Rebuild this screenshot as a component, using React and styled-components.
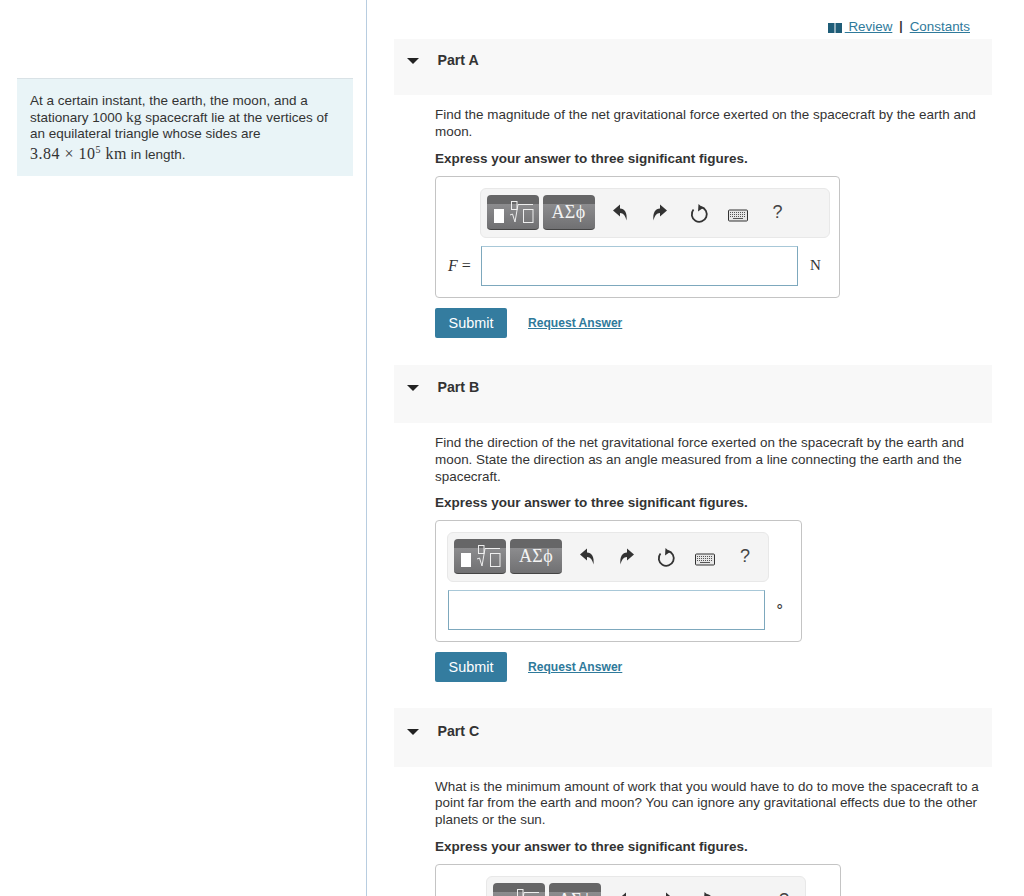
import React from "react";
import styled, { createGlobalStyle } from "styled-components";

const Global = createGlobalStyle`
  html, body { margin: 0; padding: 0; height: 896px; overflow: hidden; background: #fff; }
  body { font-family: "Liberation Sans", Arial, sans-serif; color: #333; }
`;
const Page = styled.div`display: flex; width: 1024px; height: 896px; overflow: hidden;`;
const Sidebar = styled.aside`
  box-sizing: border-box; width: 367px; flex: none; padding: 78px 13px 0 17px;
  border-right: 1px solid #b8cde0;
`;
const Intro = styled.div`
  box-sizing: border-box; height: 98px;
  background: #e9f4f7; border-top: 1px solid #d9e2e6;
  padding: 14px 13px 0; font-size: 13.5px; line-height: 16.6px; color: #333;
`;
const MathText = styled.span`font-family: "Liberation Serif", serif; font-size: ${p => p.$size}px; letter-spacing: ${p => p.$track || 0}px; line-height: 0;`;
const MathLine = styled.div`margin-top: 4px;`;
const Sup = styled.sup`font-size: 10px; line-height: 0;`;
const Main = styled.main`flex: 1; min-width: 0; padding: 0 32px 0 27px;`;
const TopLinks = styled.div`
  height: 39px; box-sizing: border-box; padding: 14px 22px 0 0;
  display: flex; justify-content: flex-end; align-items: center; font-size: 13.4px; line-height: 15px; gap: 7px; color: #333;
`;
const ReviewLink = styled.a`color: #2f7a9b; text-decoration: underline; display: inline-flex; white-space: pre;`;
const Separator = styled.span`font-weight: 700; font-size: 12px;`;
const BookIcon = styled.svg`width: 14px; height: 10px; margin-right: -4px; align-self: center; margin-top: 13px; transform: translateY(-5px);`;
const PartHeader = styled.div`
  box-sizing: border-box; height: ${p => p.$h}px; background: #f8f8f8;
  display: flex; padding: ${p => p.$pad}px 0 0 13px; align-items: flex-start; gap: 18.500px;
  font-size: 14.2px; font-weight: 700; line-height: 16px; color: #333;
`;
const Caret = styled.i`
  width: 0; height: 0; margin-top: 6px; border-left: 6px solid transparent; border-right: 6px solid transparent;
  border-top: 6px solid #222;
`;
const PartBody = styled.div`padding: ${p => p.$top}px 0 0 41px; margin-bottom: ${p => p.$bottom}px;`;
const Question = styled.p`margin: 0 0 10px; font-size: 13.45px; line-height: ${p => p.$lead}px; color: #333; width: 550px;`;
const Instruction = styled.p`margin: 0 0 9px; font-size: 13.5px; font-weight: 700; line-height: 16px; color: #333;`;
const AnswerBox = styled.div`
  box-sizing: border-box; width: ${p => p.$w}px; height: 122px; border: 1px solid #c4c4c4; border-radius: 4px; background: #fff;
  padding: 11px 0 0;
`;
const Toolbar = styled.div`
  box-sizing: border-box; width: ${p => p.$w}px; height: 50px; margin-left: ${p => p.$left}px;
  background: #f4f4f4; border: 1px solid #e8e8e8; border-radius: 6px;
  display: flex; align-items: center; padding: 0 0 0 6px;
`;
const TemplateButton = styled.div`
  box-sizing: border-box; flex: none; height: 35px; width: 52px; margin-right: 4px; border-radius: 4px;
  background: linear-gradient(#666667 0 9px, #8c8c8e 9px, #707072 100%);
  border-bottom: 1px solid #444; display: flex; align-items: center; justify-content: center;
  color: #f4f4f4; font-family: "Liberation Serif", serif; font-size: 18px; letter-spacing: .3px;
`;
const TemplateSvg = styled.svg`flex: none; width: 52px; height: 34px; align-self: flex-start;`;
const ToolIcon = styled.svg`flex: none; width: 40px; height: 24px; color: #333;`;
const Help = styled.span`flex: none; width: 40px; margin-left: -2px; text-align: center; font-size: 18px; color: #444;`;
const ToolGap = styled.span`flex: none; width: 1px;`;
const InputRow = styled.div`display: flex; align-items: center; margin-top: 8px; height: 40px;`;
const VarLabel = styled.span`
  box-sizing: border-box; flex: none; width: ${p => p.$w}px; padding-left: 12px;
  font-family: "Liberation Serif", serif; font-size: 16px; color: #333; white-space: pre;
`;
const AnswerInput = styled.div`
  box-sizing: border-box; flex: none; width: 317px; height: 40px; background: #fff;
  border: 1px solid #7da8bd; border-top-color: #a8c8d8;
`;
const Unit = styled.span`flex: none; font-family: "Liberation Serif", serif; font-size: 15px; color: #333; margin-left: ${p => p.$gap}px; margin-bottom: ${p => p.$raise || 0}px;`;
const Actions = styled.div`display: flex; align-items: center; margin-top: 10px; gap: 21px;`;
const Submit = styled.button`
  width: 72px; height: 30px; padding: 0; border: 0; border-radius: 2px; background: #347c9f; color: #fff;
  font: 14.4px "Liberation Sans", sans-serif;
`;
const RequestLink = styled.a`color: #2f7a9b; font-size: 12.1px; font-weight: 700; text-decoration: underline;`;

const ARROW = "M13 9.500L20 3.500V7.500C24.500 7.500 27.500 11.500 26.500 19.500C25.500 15 23.500 12 20 12V15.500Z";
const Tools = () => (
  <>
    <ToolGap />
    <ToolIcon viewBox="0 0 40 24"><path fill="currentColor" d={ARROW} /></ToolIcon>
    <ToolIcon viewBox="0 0 40 24"><path fill="currentColor" transform="matrix(-1 0 0 1 40 0)" d={ARROW} /></ToolIcon>
    <ToolIcon viewBox="0 0 40 24">
      <path fill="none" stroke="currentColor" strokeWidth="1.800" d="M21 6A7.500 7.500 0 1 1 13.500 8.500" />
      <path fill="currentColor" d="M18.500 3L23 7L18 10.500Z" />
    </ToolIcon>
    <ToolIcon viewBox="0 0 40 24">
      <rect x="8.500" y="9" width="19" height="11" rx="1" fill="#e6e6e6" stroke="currentColor" />
      <path stroke="#555" strokeDasharray="1 1" d="M10 11.500h16M10 13.500h16M10 15.500h16" />
      <path stroke="#555" d="M13 17.500h10" />
    </ToolIcon>
    <Help>?</Help>
  </>
);
const TemplateIcon = () => (
  <TemplateSvg viewBox="0 0 52 34">
    <rect x="7" y="14" width="10" height="14" fill="#fff" />
    <g fill="none" stroke="#eee">
      <rect x="24.500" y="6.500" width="5.500" height="8" />
      <rect x="36.500" y="14.500" width="9.500" height="13" />
      <path d="M23 20l2.500-1 2.500 8L31 9.500h15" />
    </g>
  </TemplateSvg>
);
const Part = ({ name, h, pad, top, bottom, lead, question, label, unit, boxW, toolW, toolLeft, labelW, unitGap, raise }) => (
  <>
    <PartHeader $h={h} $pad={pad}><Caret />{name}</PartHeader>
    <PartBody $top={top} $bottom={bottom}>
      <Question $lead={lead}>{question}</Question>
      <Instruction>Express your answer to three significant figures.</Instruction>
      <AnswerBox $w={boxW}>
        <Toolbar $w={toolW} $left={toolLeft}>
          <TemplateButton><TemplateIcon /></TemplateButton>
          <TemplateButton>ΑΣϕ</TemplateButton>
          <Tools />
        </Toolbar>
        <InputRow>
          <VarLabel $w={labelW}>{label}</VarLabel>
          <AnswerInput />
          <Unit $gap={unitGap} $raise={raise}>{unit}</Unit>
        </InputRow>
      </AnswerBox>
      <Actions><Submit>Submit</Submit><RequestLink>Request Answer</RequestLink></Actions>
    </PartBody>
  </>
);

export default function App() {
  return (
    <Page>
      <Global />
      <Sidebar>
        <Intro>
          At a certain instant, the earth, the moon, and a stationary 1000 <MathText $size={15.5}>kg</MathText> spacecraft lie at the vertices of an equilateral triangle whose sides are
          <MathLine>
            <MathText $size={16} $track={0.5}>3.84 × 10<Sup>5</Sup> km</MathText> in length.
          </MathLine>
        </Intro>
      </Sidebar>
      <Main>
        <TopLinks>
          <BookIcon viewBox="0 0 14 10"><path fill="#1f5d78" d="M0 0h6.500v10H0zM7.500 0H14v10H7.500z" /></BookIcon>
          <ReviewLink> Review</ReviewLink><Separator>|</Separator><ReviewLink>Constants</ReviewLink>
        </TopLinks>
        <Part name="Part A" h={56} pad={13} top={12} bottom={27} lead={16.8}
          question="Find the magnitude of the net gravitational force exerted on the spacecraft by the earth and moon."
          label={<><i>F</i> =</>} unit="N" boxW={405} toolW={350} toolLeft={43.5} labelW={45} unitGap={12} />
        <Part name="Part B" h={58} pad={14} top={11} bottom={26} lead={17}
          question="Find the direction of the net gravitational force exerted on the spacecraft by the earth and moon. State the direction as an angle measured from a line connecting the earth and the spacecraft."
          label="" unit="∘" boxW={367} toolW={322} toolLeft={11} labelW={12} unitGap={10} raise={8} />
        <Part name="Part C" h={59} pad={15.5} top={12} bottom={0} lead={16.8}
          question="What is the minimum amount of work that you would have to do to move the spacecraft to a point far from the earth and moon? You can ignore any gravitational effects due to the other planets or the sun."
          label="" unit="" boxW={406} toolW={320} toolLeft={50} labelW={50} unitGap={11} />
      </Main>
    </Page>
  );
}
